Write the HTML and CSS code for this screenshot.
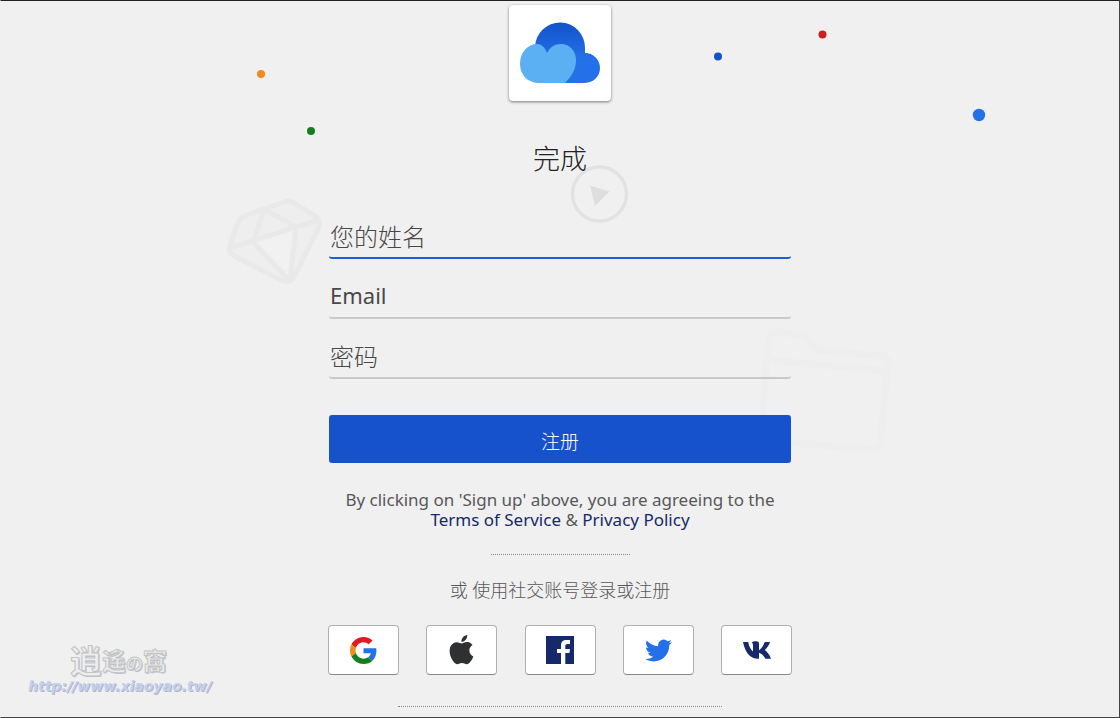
FILE: index.html
```html
<!DOCTYPE html>
<html lang="zh-CN">
<head>
    <meta charset="utf-8">
    <title>注册</title>
    <link rel="stylesheet" href="styles.css">
</head>
<body>
    <svg class="scene" width="1120" height="480" viewBox="0 0 1120 480" aria-hidden="true">
        <circle cx="261" cy="74" r="4" fill="#f28a1c"/>
        <circle cx="311" cy="131" r="4" fill="#12801c"/>
        <circle cx="718" cy="56.500" r="4" fill="#1452cc"/>
        <circle cx="822.500" cy="34.500" r="4" fill="#cc2020"/>
        <circle cx="979" cy="115" r="6.200" fill="#2470e8"/>
        <!-- play -->
        <circle cx="599.500" cy="194" r="27" fill="none" stroke="#e2e2e2" stroke-width="3.400"/>
        <path d="M590 185.500L609.500 191.500L595 206z" fill="#dedede"/>
        <!-- gem -->
        <g fill="none" stroke="#e9e9e9" stroke-width="5" stroke-linejoin="round">
            <path fill="#eeeeee" d="M244 216L284 202Q289 200 294 203L315 216Q321 220 319 227L295 275Q290 284 281 280L234 256Q227 251 230 245L238 222Q240 218 244 216z"/>
            <path fill="#f1f1f1" d="M252 241L296 227L290 281z"/>
            <path d="M229 248L252 241M296 227L319 220M264 209L254 240M264 209L296 227"/>
        </g>
        <!-- folder -->
        <g fill="none" stroke="#eeeeee" stroke-width="7" stroke-linejoin="round">
            <path d="M767 361L769 338Q770 332 776 332L801 335Q804 335 807 339L817 350L883 356Q889 357 888 364L880 444Q879 451 872 450L766 440Q760 439 761 432z"/>
            <path d="M768 360L886 371"/>
        </g>
    </svg>

    <main class="signup">
        <div class="logo">
            <svg width="82" height="62" viewBox="0 0 82 62" role="img" aria-label="Cloud">
                <defs>
                    <linearGradient id="back" x1="0" y1="0" x2="0" y2="1">
                        <stop offset="0" stop-color="#1452cc"/>
                        <stop offset=".6" stop-color="#2470e8"/>
                    </linearGradient>
                </defs>
                <path d="M16 25A25 25 0 0 1 66 26V31A15 15 0 0 1 66 61H20z" fill="url(#back)"/>
                <path d="M20 61C9 61 1 53 1 42C1 30 9 22 18 22C22 22 26 25 28 31C31 25 36 22 42 22C51 22 57 29 57 38C57 47 53 54 46 61z" fill="#5ab0f2"/>
            </svg>
        </div>
        <h1>完成</h1>

        <form>
            <input class="field" type="text" placeholder="您的姓名" aria-label="您的姓名">
            <input class="field" type="email" placeholder="Email" aria-label="Email">
            <input class="field" type="password" placeholder="密码" aria-label="密码">
            <button class="submit" type="button">注册</button>
        </form>

        <p class="terms">By clicking on 'Sign up' above, you are agreeing to the<br>
            <a href="#">Terms of Service</a> &amp; <a href="#">Privacy Policy</a></p>

        <hr class="dots">
        <p class="or">或 使用社交账号登录或注册</p>

        <div class="social">
            <button type="button" aria-label="Google">
                <svg width="27" height="27" viewBox="0 0 48 48">
                    <path fill="#e01a20" d="M24 9.500c3.540 0 6.710 1.220 9.210 3.600l6.850-6.850C35.900 2.380 30.470 0 24 0 14.620 0 6.510 5.380 2.560 13.220l7.980 6.190C12.430 13.720 17.740 9.500 24 9.500z"/>
                    <path fill="#2470e8" d="M46.980 24.550c0-1.570-.15-3.090-.38-4.550H24v9.020h12.940c-.58 2.960-2.260 5.480-4.780 7.180l7.730 6c4.510-4.180 7.090-10.360 7.090-17.650z"/>
                    <path fill="#ee9015" d="M10.530 28.590c-.48-1.450-.76-2.990-.76-4.590s.27-3.140.76-4.590l-7.980-6.190C.92 16.460 0 20.120 0 24c0 3.880.92 7.540 2.560 10.780l7.970-6.190z"/>
                    <path fill="#12801c" d="M24 48c6.480 0 11.930-2.130 15.890-5.810l-7.730-6c-2.150 1.450-4.920 2.300-8.160 2.300-6.260 0-11.570-4.220-13.470-9.910l-7.980 6.190C6.510 42.620 14.620 48 24 48z"/>
                </svg>
            </button>
            <button type="button" aria-label="Apple">
                <svg width="35" height="35" viewBox="0 0 24 24" fill="#2f3032">
                    <path d="M18.710 18.900c-.83 1.240-1.710 2.450-3.050 2.470-1.340.03-1.770-.79-3.290-.79-1.530 0-2 .77-3.270.82-1.310.05-2.300-1.320-3.140-2.530C4.250 16.400 2.940 11.850 4.700 8.790c.87-1.520 2.430-2.480 4.120-2.510 1.280-.02 2.500.87 3.290.87.780 0 2.260-1.070 3.810-.91.650.03 2.470.26 3.640 1.980-.09.060-2.170 1.280-2.150 3.810.03 3.020 2.650 4.030 2.680 4.040-.03.070-.42 1.440-1.380 2.830M13 2.900c.73-.83 1.940-1.460 2.940-1.500.13 1.170-.34 2.350-1.040 3.190-.69.850-1.830 1.510-2.950 1.420-.15-1.150.41-2.350 1.050-3.110z"/>
                </svg>
            </button>
            <button type="button" aria-label="Facebook">
                <svg width="28" height="28" viewBox="0 0 28 28">
                    <path d="M0 0h28v28H0z" fill="#15296b"/>
                    <path d="M15 28V17h-4v-4h4V9.500C15 5.800 17 4 20.400 4H24v4h-2.400C19.800 8 19.300 8.700 19.300 10.200V13H24l-.6 4h-4.100v11z" fill="#fff"/>
                </svg>
            </button>
            <button type="button" aria-label="Twitter">
                <svg width="27" height="27" viewBox="0 0 24 24" fill="#2470e8">
                    <path d="M23.950 4.570a10 10 0 0 1-2.820.77 4.960 4.960 0 0 0 2.160-2.720c-.95.550-2 .95-3.130 1.180a4.920 4.920 0 0 0-8.380 4.480C7.690 8.090 4.070 6.130 1.640 3.160a4.920 4.920 0 0 0 1.520 6.570 4.900 4.900 0 0 1-2.230-.61v.06a4.920 4.920 0 0 0 3.950 4.830 5 5 0 0 1-2.210.08 4.940 4.940 0 0 0 4.600 3.420A9.870 9.870 0 0 1 0 19.540a14 14 0 0 0 7.560 2.210c9.050 0 14-7.500 14-13.980 0-.21 0-.42-.02-.63a9.900 9.900 0 0 0 2.410-2.570z"/>
                </svg>
            </button>
            <button type="button" aria-label="VK">
                <svg width="28" height="20" viewBox="0 0 28 20" fill="#15296b">
                    <path d="M0 2h5.200C6 6 7.500 9.500 10 11.500V5.500C10 3.500 9.200 3 8.600 2.600 9.500 1.600 11 1.300 13 1.300c2.600 0 3 .8 3 2.700v6.200c2.800-1.600 4.500-5 5.800-8.200H27c-1 3.400-3.200 6-5.200 8 2.400 2 4.700 4.500 6.200 8.700h-5.600c-1.200-2.600-3.400-4.900-6.400-6v6C6.500 19 2 11.600 0 2z"/>
                </svg>
            </button>
        </div>
        <hr class="dots wide">
    </main>

    <div class="watermark">
        <div class="name"><span class="big">逍</span><span>遙</span><span class="no">の</span><span>窩</span></div>
        <div class="url">http://www.xiaoyao.tw/</div>
    </div>
</body>
</html>
```
FILE: styles.css
```css
* {
    box-sizing: border-box;
}
body {
    position: relative;
    margin: 0;
    min-height: 100vh;
    overflow: hidden;
    background: #f0f0f0;
    border: 1px solid #444;
    border-top-color: #222;
    border-left-color: #f0f0f0;
    color: #58585a;
    font-family: "Open Sans", "Noto Sans CJK SC", sans-serif;
    font-weight: 300;
}
.scene {
    position: absolute;
    top: -1px;
    left: 50%;
    margin-left: -560px;
}
.signup {
    position: relative;
    display: flex;
    flex-direction: column;
    align-items: center;
    max-width: 462px;
    margin: 0 auto;
    padding-top: 4px;
}
.logo {
    display: flex;
    align-items: center;
    justify-content: center;
    width: 102px;
    height: 96px;
    background: #fff;
    border-radius: 4px;
    box-shadow: 0 1px 3px rgba(0, 0, 0, .5);
}
h1 {
    margin: 38px 0 0;
    color: #222;
    font-size: 27px;
    font-weight: 300;
    line-height: 40px;
}
form {
    display: flex;
    flex-direction: column;
    gap: 12px;
    width: 100%;
    margin-top: 32px;
}
.field {
    width: 100%;
    height: 48px;
    padding: 4px 1px 0;
    background: transparent;
    border: 0;
    border-bottom: 2px solid #c8c8c8;
    border-radius: 3px;
    outline: none;
    font: inherit;
    font-size: 24px;
}
.field::placeholder {
    color: #484848;
    opacity: 1;
}
.field[type=email] {
    padding-top: 2px;
    font-family: "Noto Sans", sans-serif;
    font-size: 22px;
    font-weight: 400;
}
.field:first-child {
    border-bottom-color: #1a5fd4;
}
.submit {
    height: 48px;
    margin-top: 24px;
    padding: 4px 0 0;
    background: #1652cb;
    border: 0;
    border-radius: 3px;
    color: #fff;
    font: inherit;
    font-size: 19px;
    cursor: pointer;
}
.terms {
    margin: 27px 0 0;
    font-family: "Noto Sans", sans-serif;
    font-size: 17px;
    font-weight: 400;
    line-height: 20px;
    text-align: center;
    white-space: nowrap;
}
.terms a {
    color: #15296b;
    text-decoration: none;
}
.dots {
    width: 139px;
    margin: 24px 0 0;
    border: 0;
    border-top: 1px dotted #888;
}
.or {
    margin: 21px 0 0;
    font-size: 18px;
    line-height: 28px;
}
.social {
    display: flex;
    justify-content: space-between;
    width: 464px;
    margin-top: 21px;
}
.social button {
    display: flex;
    align-items: center;
    justify-content: center;
    width: 71px;
    height: 50px;
    padding: 0;
    background: #fff;
    border: 1px solid #b0b0b0;
    border-bottom-color: #888;
    border-radius: 4px;
    cursor: pointer;
}
.dots.wide {
    width: 324px;
    margin-top: 31px;
}
.watermark {
    position: absolute;
    left: 27px;
    bottom: 23px;
    font-family: "DejaVu Sans", "Noto Sans CJK TC", sans-serif;
    font-weight: 700;
}
.watermark .name {
    display: flex;
    align-items: flex-end;
    padding-left: 42px;
    color: #eee;
    font-size: 24px;
    line-height: 32px;
    -webkit-text-stroke: 1px #c4c4c4;
    text-shadow: 1px 1px 0 #b4bddd;
}
.watermark .big {
    font-size: 32px;
}
.watermark .no {
    font-size: 17px;
    line-height: 28px;
}
.watermark .url {
    color: #c4d0ec;
    font-size: 14px;
    font-style: italic;
    line-height: 16px;
    text-shadow: 1px 1px 0 #b0b4c8;
}
```
